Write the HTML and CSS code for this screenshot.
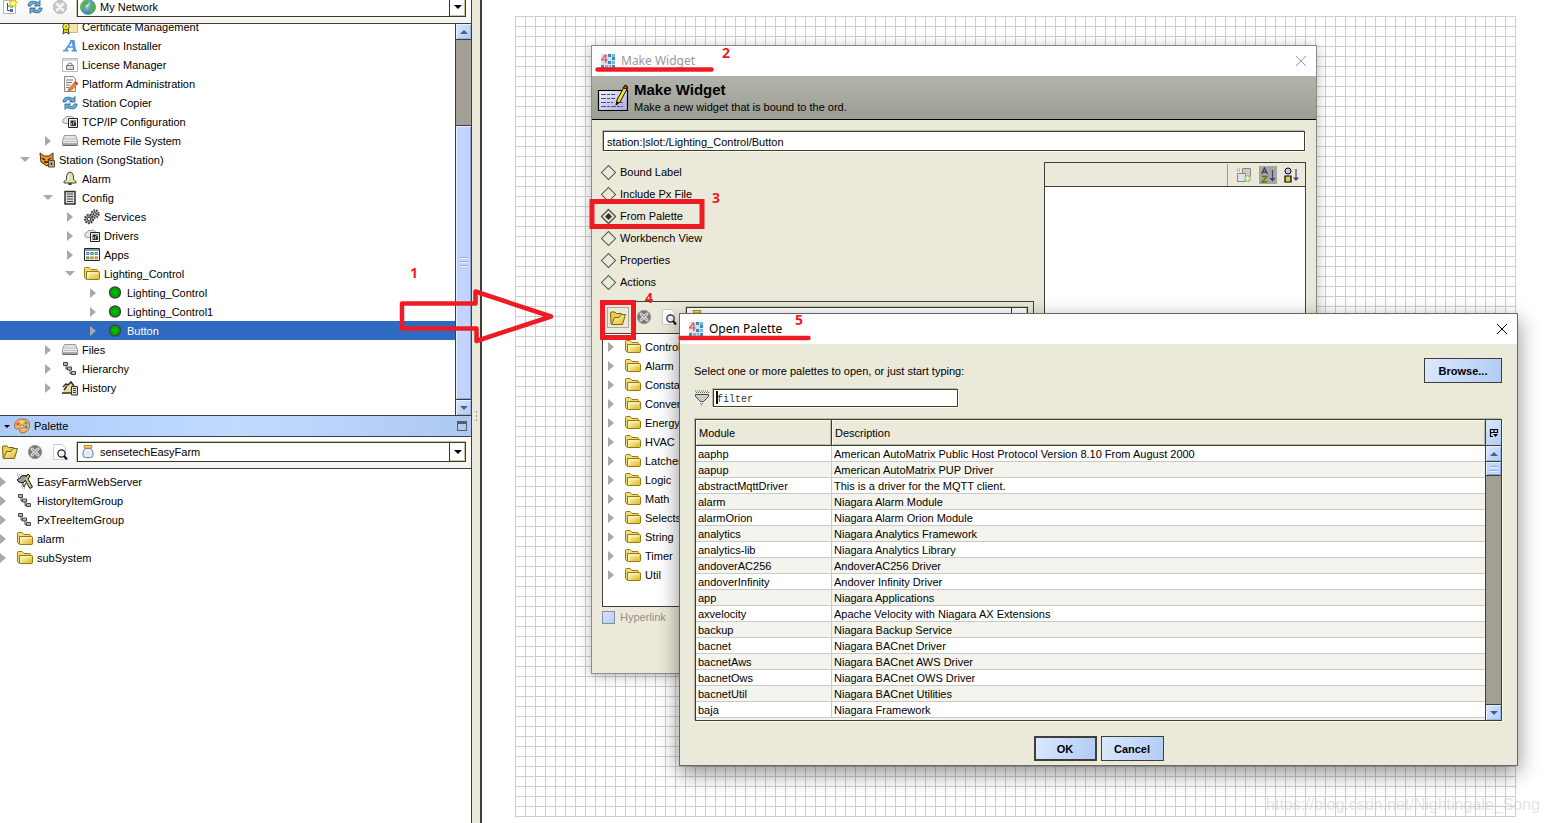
FILE: index.html
```html
<!DOCTYPE html>
<html lang="en">
<head>
<meta charset="utf-8">
<title>Workbench</title>
<link rel="stylesheet" href="styles.css">
</head>
<body>
<svg class="defs" aria-hidden="true">
  <defs>
    <linearGradient id="gold" x1="0" y1="0" x2="1" y2="1"><stop offset="0" stop-color="#fffbd8"/><stop offset="1" stop-color="#dcb718"/></linearGradient>
    <linearGradient id="metal" x1="0" y1="0" x2="0" y2="1"><stop offset="0" stop-color="#f0f0f0"/><stop offset="1" stop-color="#9a9a9a"/></linearGradient>
    <linearGradient id="lilac" x1="0" y1="0" x2="1" y2="1"><stop offset="0" stop-color="#f4f4ff"/><stop offset="1" stop-color="#a9a9e0"/></linearGradient>
    <radialGradient id="lamp"><stop offset="0" stop-color="#0c0"/><stop offset="1" stop-color="#079007"/></radialGradient>
    <radialGradient id="sea" cx=".35" cy=".35"><stop offset="0" stop-color="#d6efff"/><stop offset="1" stop-color="#3b86c4"/></radialGradient>
  </defs>
  <symbol id="folder" viewBox="0 0 16 16"><path d="M.5 11.500V2.500Q.5 1.500 1.500 1.500H5L7 3.500H12.500Q13.500 3.500 13.500 4.500V6H2.500V13.500Z" fill="#f1dc7a" stroke="#96790c"/><path d="M2.500 5.500H14.500Q15.500 5.500 15.500 6.500V12.500Q15.500 13.500 14.500 13.500H3.500Q2.500 13.500 2.500 12.500Z" fill="url(#gold)" stroke="#96790c"/><path d="M4 12.500V7H14" fill="none" stroke="#fff6b8"/></symbol>
  <symbol id="open" viewBox="0 0 16 16"><path d="M1 14L.5 3Q.5 2 1.500 2H5L6.500 3.500H11.500V6" fill="#e9cc50" stroke="#7d6407"/><path d="M1.500 14.500L4.500 7.500H9L11 4.500H15.500L12.500 14.500Z" fill="url(#gold)" stroke="#7d6407"/></symbol>
  <symbol id="sync" viewBox="0 0 16 16"><path d="M1 7C1 3 4 1.500 8 2.500L11 3.500L13 1.500V7H7.500L9.500 5.500C6 4 4 5 4 7Z" fill="#62b3dd" stroke="#24577d" stroke-width=".8"/><path d="M15 9C15 13 12 14.500 8 13.500L5 12.500L3 14.500V9H8.500L6.500 10.500C10 12 12 11 12 9Z" fill="#62b3dd" stroke="#24577d" stroke-width=".8"/></symbol>
  <symbol id="stop" viewBox="0 0 16 16"><circle cx="8" cy="8" r="6.700" fill="#777" stroke="#999"/><path d="M5 5L11 11M11 5L5 11" stroke="#f4f4f4" stroke-width="3" stroke-linecap="round"/><path d="M5 5L11 11M11 5L5 11" stroke="#999" stroke-width="1.400" stroke-linecap="round"/></symbol>
  <symbol id="stop-off" viewBox="0 0 16 16"><circle cx="8" cy="8" r="6.700" fill="#c8c8c8" stroke="#bbb"/><path d="M5 5L11 11M11 5L5 11" stroke="#f6f6f6" stroke-width="2.600" stroke-linecap="round"/></symbol>
  <symbol id="find" viewBox="0 0 16 16"><path d="M1.500.5H10L13.500 4V15.500H1.500Z" fill="#fff" stroke="#ccc"/><circle cx="9.500" cy="9.500" r="3.600" fill="#eef4ff" stroke="#222" stroke-width="1.200"/><path d="M12 12L15 15.500" stroke="#111" stroke-width="2"/></symbol>
  <symbol id="newtree" viewBox="0 0 16 16"><path d="M1.500 1.500H13.500V14.500H1.500Z" fill="#fff" stroke="#b5b5b5"/><path d="M5.500 4V11.500H9M5.500 7H9" fill="none" stroke="#555"/><path d="M8 5.500H11V8.500H8ZM8 10H11V13H8Z" fill="#3d73c5"/><path d="M11 0L12.500 2.500L15.500 3L13.500 5L14 8L11 6.500L8 8L8.500 5L7 3L10 2.500Z" fill="#fff79a" stroke="#e8c400"/></symbol>
  <symbol id="globe" viewBox="0 0 16 16"><circle cx="8" cy="8" r="7.500" fill="url(#sea)" stroke="#68a968"/><path d="M3 3Q7 0 9 2L8 5L5 7L6 10L4 12Q0 8 3 3ZM10 6L14 4Q16 8 13 12L10 14L9 10Z" fill="#59b052"/></symbol>
  <symbol id="cert" viewBox="0 0 16 16"><path d="M4.500 2H15.500V13.500H4.500Z" fill="#fbe5a2" stroke="#c9b98a"/><path d="M2 9L1 15L4 13L7 15L6 9Z" fill="#f4e800" stroke="#333"/><circle cx="4" cy="7.500" r="3.300" fill="#fff31c" stroke="#555"/><circle cx="4" cy="7.500" r="1" fill="#777"/></symbol>
  <symbol id="lexicon" viewBox="0 0 16 16"><path d="M8 2H12.500L14 12H15V13.500H9.500V12H11L10.700 9.800H6.300L5 12H6.500V13.500H1V12H2.500L8 4ZM7.200 8.200H10.500L9.900 4.200Z" fill="#5d92dc"/></symbol>
  <symbol id="license" viewBox="0 0 16 16"><path d="M.5 1.500H15.500V14.500H.5Z" fill="#fff" stroke="#bbb"/><path d="M1 2H15V4H1Z" fill="#d6dbe4"/><path d="M4.500 8.500H11.500V12.500H4.500Z" fill="#ddd" stroke="#777"/><path d="M6 8V7Q8 4.500 10 7V8" fill="none" stroke="#777"/></symbol>
  <symbol id="edit" viewBox="0 0 16 16"><path d="M2.500.5H11.500L13.500 3V15.500H2.500Z" fill="#f5f5f5" stroke="#888"/><path d="M4 4H11M4 6.500H10M4 9H8M4 11.500H7" stroke="#777"/><path d="M7 12.500L13 6L15.500 8L9.500 14L6.500 14.500Z" fill="#f58a1d" stroke="#a24c00" stroke-width=".7"/><path d="M13 6L15.500 8" stroke="#d33" stroke-width="2"/></symbol>
  <symbol id="net" viewBox="0 0 16 16"><path d="M3 9.500Q0 9 .7 6.500Q1 4.500 3 4.500Q4 1.500 7 2.500Q10 1 11.500 4Q14.500 4.500 14 7V9.500Z" fill="#e8e8e8" stroke="#999"/><path d="M6.500 4.500H15.500V13.500H6.500Z" fill="#eee" stroke="#222"/><path d="M8.500 6.500H14V12H8.500Z" fill="#333"/><path d="M9.500 11V9M11.500 11V8" stroke="#aaa"/><path d="M12 7.500H14" stroke="#36d336" stroke-width="1.500"/></symbol>
  <symbol id="drive" viewBox="0 0 16 16"><path d="M2.500 2.500H13.500L15.500 7.500V12.500H.5V7.500Z" fill="url(#metal)" stroke="#999"/><path d="M1 7.500H15M1 9.500H15" stroke="#eee"/><path d="M1 12.500H15" stroke="#666"/></symbol>
  <symbol id="fox" viewBox="0 0 16 16"><path d="M1 1L5 4H10L14 1V9L8 14L2 10Z" fill="#f49c20" stroke="#4a2a05"/><path d="M3 6L6 8M12 6L9 8M5 10H9" stroke="#311" stroke-width="1.400"/><path d="M9.500 8.500H15.500V15H9.500Z" fill="#c1af86" stroke="#554a36"/><path d="M10.500 8Q12.500 4 14.500 8" fill="none" stroke="#777"/><path d="M12.500 10.500V13" stroke="#333" stroke-width="1.500"/></symbol>
  <symbol id="bell" viewBox="0 0 16 16"><path d="M8 1Q11 1.500 11.500 5V8.500L14 10.500V12H2V10.500L4.500 8.500V5Q5 1.500 8 1Z" fill="#e5e19a" stroke="#444"/><path d="M6.500 13H9.500" stroke="#333" stroke-width="2"/><path d="M6.500 4V9" stroke="#fff"/></symbol>
  <symbol id="config" viewBox="0 0 16 16"><path d="M3 1.500H13V14H3Z" fill="#ddd" stroke="#333" stroke-width="1.500"/><path d="M5 4H11M5 6.500H11M5 9H11M5 11.500H11" stroke="#444" stroke-width="1.200"/></symbol>
  <symbol id="gears" viewBox="0 0 16 16"><circle cx="5" cy="10" r="4" fill="#bbb" stroke="#444" stroke-width="2.400" stroke-dasharray="1.700 1"/><circle cx="5" cy="10" r="1.800" fill="#fff" stroke="#333"/><circle cx="11" cy="5" r="3.600" fill="#bbb" stroke="#444" stroke-width="2.200" stroke-dasharray="1.500 1"/><circle cx="11" cy="5" r="1.400" fill="#fff" stroke="#333"/></symbol>
  <symbol id="apps" viewBox="0 0 16 16"><path d="M.5 1.500H15.500V13.500H.5Z" fill="#fff" stroke="#222"/><path d="M1 3H15" stroke="#8d9cb5" stroke-width="2"/><path d="M2.500 5.500H5V7.500H2.500ZM11 5.500H13.500V7.500H11Z" fill="#8fc2ee" stroke="#3a78b5" stroke-width=".8"/><path d="M6.700 5.500H9.300V7.500H6.700ZM2.500 9.800H5V12H2.500Z" fill="#8ed08a" stroke="#3b8b39" stroke-width=".8"/><path d="M6.700 9.800H9.300V12H6.700ZM11 9.800H13.500V12H11Z" fill="#f8c66e" stroke="#b9711e" stroke-width=".8"/></symbol>
  <symbol id="dot" viewBox="0 0 16 16"><circle cx="8" cy="7.500" r="5.500" fill="url(#lamp)" stroke="#444" stroke-width="1.400"/></symbol>
  <symbol id="hier" viewBox="0 0 16 16"><path d="M4 4V8H6M8 9V12.500H10" fill="none" stroke="#444"/><path d="M1.500 1.500H5.500V4.500H1.500ZM5.500 6H9.500V9H5.500ZM9.500 10.500H13.500V13.500H9.500Z" fill="#bbb" stroke="#444"/></symbol>
  <symbol id="history" viewBox="0 0 16 16"><path d="M.5 13L4 6L6 8L9 2L13 7V13Z" fill="#ecd6a0"/><path d="M0 13H9M1 7L4 4L6 5L9 2L12 6M2 10L5 6" fill="none" stroke="#332d20" stroke-width="1.500"/><path d="M9.500 6.500H15.500V15H9.500Z" fill="#ddd" stroke="#333"/><path d="M11 8.500H14M11 10.500H14M11 12.500H14" stroke="#444"/></symbol>
  <symbol id="paint" viewBox="0 0 16 16"><path d="M8 1Q15 1 15.500 6Q16 13 9 15Q5 15 6 12Q6 10 3 11Q0 11 .5 7Q2 1 8 1Z" fill="#eeb66f" stroke="#a9672b"/><circle cx="4" cy="6" r="1.500" fill="#e64a28"/><circle cx="8" cy="4" r="1.500" fill="#f7e44c"/><circle cx="12" cy="5" r="1.500" fill="#49a94a"/><circle cx="12" cy="9" r="1.500" fill="#3c7fd0"/><circle cx="8" cy="8.500" r="1.600" fill="#fff" stroke="#a9672b"/></symbol>
  <symbol id="jar" viewBox="0 0 16 16"><path d="M5 4.500H11V5Q13 6 13 9V11Q13 13.500 10.500 13.500H5.500Q3 13.500 3 11V9Q3 6 5 5Z" fill="#e1edfb" stroke="#6e7f9a"/><path d="M4 1.500H12L11.500 4H4.500Z" fill="#f7d981" stroke="#b98a1d"/></symbol>
  <symbol id="hammer" viewBox="0 0 16 16"><path d="M0 1H5M1 3H4M5 14H9M4 12H8" stroke="#668" stroke-dasharray="1 1"/><path d="M0 6L6 1.500L12 2L10 5L6 9L2 8Z" fill="#999" stroke="#111"/><path d="M9 3L11 0L13 2L11 5L15.500 13L13 14.500L8 6" fill="#b8d27b" stroke="#111"/><path d="M5 9L7 13L9 9" fill="#ccc" stroke="#333"/></symbol>
  <symbol id="logo" viewBox="0 0 14 14"><path d="M0 0H14V14H0Z" fill="#dfe1e4"/><path d="M7 0H10V3H7ZM11 3H14V6H11ZM7 7H10V10H7ZM11 11H14V14H11ZM0 11H3V14H0Z" fill="#2b8fc8"/><path d="M11 0H14V3H11ZM4 11H7V14H4ZM8 11H10V14H8ZM11 7H14V10H11Z" fill="#79b8dc"/><path d="M4.500 .5L.7 6H6.500M4.800 1V9" fill="none" stroke="#e3404a" stroke-width="1.200"/></symbol>
  <symbol id="note" viewBox="0 0 32 28"><path d="M1.500 6.500H30.500V26.500H1.500Z" fill="url(#lilac)" stroke="#000" stroke-width="1.200"/><path d="M4 10.500H18M4 14.500H18M4 18.500H16M4 22.500H26M21 18.500H27" stroke="#4a4a90" stroke-dasharray="5 1 3 1"/><path d="M19 21L20 16L27 3L30 5L23 18Z" fill="#ece321" stroke="#111"/><path d="M26 4L28 1Q31 1 30.500 5Z" fill="#c23b3b" stroke="#111"/><path d="M19 21L20 17L22 19Z" fill="#111"/></symbol>
  <symbol id="funnel" viewBox="0 0 16 16"><path d="M1 1H15" stroke="#a55" stroke-dasharray="1 1"/><path d="M2 2.500H15" stroke="#575" stroke-dasharray="1 1"/><path d="M6 13.500H10M7 15H9" stroke="#66a" stroke-width="1.200" stroke-dasharray="1 1"/><path d="M1.500 4.500H14.500V6.500L9.500 11.500H6.500L1.500 6.500Z" fill="#ccc" stroke="#444"/></symbol>
  <symbol id="addrow" viewBox="0 0 16 16"><path d="M6.500 1.500H14.500V9.500H6.500Z" fill="#ccccc0" stroke="#888"/><path d="M1.500 6.500H9.500V14.500H1.500Z" fill="#e1e1ee" stroke="#888"/><path d="M1 2H5M1 4H4" stroke="#888" stroke-dasharray="1 1"/><circle cx="11.500" cy="11.500" r="3.500" fill="#9fc683"/><path d="M11.500 9.500V13.500M9.500 11.500H13.500" stroke="#fff" stroke-width="1.400"/></symbol>
  <symbol id="az" viewBox="0 0 16 16"><path d="M1.500 7L4.500 1L7.500 7M2.500 5H6.500" fill="none" stroke="#404080" stroke-width="1.400"/><path d="M2 9.500H7L2 15H7.500" fill="none" stroke="#717118" stroke-width="1.400"/><path d="M12.500 3V13" stroke="#404080" stroke-width="1.200"/><path d="M9.500 11H15.500L12.500 14.500Z" fill="#404080"/></symbol>
  <symbol id="kind" viewBox="0 0 16 16"><circle cx="4" cy="4" r="3" fill="#c3c8f3" stroke="#000"/><path d="M1 9H7V15H1Z" fill="#d2cf5d" stroke="#000" stroke-width="1.200"/><path d="M12 2V13" stroke="#404080" stroke-width="1.200"/><path d="M9 10.500H15L12 14Z" fill="#404080"/></symbol>
  <symbol id="cross" viewBox="0 0 12 12"><path d="M1 1L11 11M11 1L1 11" stroke="currentColor" fill="none"/></symbol>
  <symbol id="cols" viewBox="0 0 10 10"><path d="M4 8.500H1.500V1.500H8.500V5M1.500 4.500H8.500M5 1.500V4.500" fill="none" stroke="#000" stroke-width="1.200"/><path d="M4 6H9L6.500 9Z" fill="#000"/></symbol>
</svg>

<div class="app">
  <aside class="sidebar">
    <section class="nav">
      <div class="toolbar toolbar-cut">
        <button class="tool" aria-label="New tree"><svg class="icon"><use href="#newtree"/></svg></button>
        <button class="tool" aria-label="Refresh"><svg class="icon"><use href="#sync"/></svg></button>
        <button class="tool" aria-label="Stop"><svg class="icon"><use href="#stop-off"/></svg></button>
        <div class="combo"><svg class="icon"><use href="#globe"/></svg><select aria-label="Network"><option>My Network</option></select><span class="drop"></span></div>
      </div>
      <div class="view">
        <ul class="tree tree-scrolled">
          <li class="row l2"><i class="tw"></i><svg class="icon"><use href="#cert"/></svg>Certificate Management</li>
          <li class="row l2"><i class="tw"></i><svg class="icon"><use href="#lexicon"/></svg>Lexicon Installer</li>
          <li class="row l2"><i class="tw"></i><svg class="icon"><use href="#license"/></svg>License Manager</li>
          <li class="row l2"><i class="tw"></i><svg class="icon"><use href="#edit"/></svg>Platform Administration</li>
          <li class="row l2"><i class="tw"></i><svg class="icon"><use href="#sync"/></svg>Station Copier</li>
          <li class="row l2"><i class="tw"></i><svg class="icon"><use href="#net"/></svg>TCP/IP Configuration</li>
          <li class="row l2"><i class="tw shut"></i><svg class="icon"><use href="#drive"/></svg>Remote File System</li>
          <li class="row l1"><i class="tw open"></i><svg class="icon"><use href="#fox"/></svg>Station (SongStation)</li>
          <li class="row l2"><i class="tw"></i><svg class="icon"><use href="#bell"/></svg>Alarm</li>
          <li class="row l2"><i class="tw open"></i><svg class="icon"><use href="#config"/></svg>Config</li>
          <li class="row l3"><i class="tw shut"></i><svg class="icon"><use href="#gears"/></svg>Services</li>
          <li class="row l3"><i class="tw shut"></i><svg class="icon"><use href="#net"/></svg>Drivers</li>
          <li class="row l3"><i class="tw shut"></i><svg class="icon"><use href="#apps"/></svg>Apps</li>
          <li class="row l3"><i class="tw open"></i><svg class="icon"><use href="#folder"/></svg>Lighting_Control</li>
          <li class="row l4"><i class="tw shut"></i><svg class="icon"><use href="#dot"/></svg>Lighting_Control</li>
          <li class="row l4"><i class="tw shut"></i><svg class="icon"><use href="#dot"/></svg>Lighting_Control1</li>
          <li class="row l4 selected"><i class="tw shut"></i><svg class="icon"><use href="#dot"/></svg>Button</li>
          <li class="row l2"><i class="tw shut"></i><svg class="icon"><use href="#drive"/></svg>Files</li>
          <li class="row l2"><i class="tw shut"></i><svg class="icon"><use href="#hier"/></svg>Hierarchy</li>
          <li class="row l2"><i class="tw shut"></i><svg class="icon"><use href="#history"/></svg>History</li>
        </ul>
        <div class="scroll">
          <button class="arrow up" aria-label="Scroll up"></button>
          <div class="track"></div>
          <div class="thumb grow"><span class="grip"></span></div>
          <button class="arrow down" aria-label="Scroll down"></button>
        </div>
      </div>
    </section>
    <section class="palette">
      <h2 class="bar"><i class="caret"></i><svg class="icon"><use href="#paint"/></svg>Palette<button class="max" aria-label="Maximize"></button></h2>
      <div class="toolbar">
        <button class="tool" aria-label="Open palette"><svg class="icon"><use href="#open"/></svg></button>
        <button class="tool" aria-label="Close palette"><svg class="icon"><use href="#stop"/></svg></button>
        <button class="tool" aria-label="Preview"><svg class="icon"><use href="#find"/></svg></button>
        <div class="combo"><svg class="icon"><use href="#jar"/></svg><select aria-label="Palette"><option>sensetechEasyFarm</option></select><span class="drop"></span></div>
      </div>
      <ul class="tree tree-flush">
        <li class="row"><i class="tw shut"></i><svg class="icon"><use href="#hammer"/></svg>EasyFarmWebServer</li>
        <li class="row"><i class="tw shut"></i><svg class="icon"><use href="#hier"/></svg>HistoryItemGroup</li>
        <li class="row"><i class="tw shut"></i><svg class="icon"><use href="#hier"/></svg>PxTreeItemGroup</li>
        <li class="row"><i class="tw shut"></i><svg class="icon"><use href="#folder"/></svg>alarm</li>
        <li class="row"><i class="tw shut"></i><svg class="icon"><use href="#folder"/></svg>subSystem</li>
      </ul>
    </section>
  </aside>
  <div class="splitter"><span></span></div>
  <main class="workspace"><div class="canvas"></div></main>

  <section class="window make" aria-label="Make Widget">
    <header class="title faded"><svg class="logo"><use href="#logo"/></svg>Make Widget<button class="close" aria-label="Close"><svg><use href="#cross"/></svg></button></header>
    <div class="banner"><svg class="note"><use href="#note"/></svg><div><h1>Make Widget</h1><p>Make a new widget that is bound to the ord.</p></div></div>
    <div class="make-body">
      <input class="field ord" type="text" aria-label="Ord" value="station:|slot:/Lighting_Control/Button">
      <div class="columns">
        <div>
          <label class="choice"><input type="radio" name="source">Bound Label</label>
          <label class="choice"><input type="radio" name="source">Include Px File</label>
          <label class="choice"><input type="radio" name="source" checked>From Palette</label>
          <label class="choice"><input type="radio" name="source">Workbench View</label>
          <label class="choice"><input type="radio" name="source">Properties</label>
          <label class="choice"><input type="radio" name="source">Actions</label>
          <div class="chooser">
            <div class="toolbar beige">
              <button class="tool pressed" aria-label="Open palette"><svg class="icon"><use href="#open"/></svg></button>
              <button class="tool" aria-label="Close palette"><svg class="icon"><use href="#stop"/></svg></button>
              <button class="tool" aria-label="Preview"><svg class="icon"><use href="#find"/></svg></button>
              <div class="combo"><svg class="icon"><use href="#jar"/></svg><select aria-label="Widget palette"><option></option></select><span class="drop"></span></div>
            </div>
            <ul class="tree tree-widgets">
              <li class="row"><i class="tw shut"></i><svg class="icon"><use href="#folder"/></svg>Control</li>
              <li class="row"><i class="tw shut"></i><svg class="icon"><use href="#folder"/></svg>Alarm</li>
              <li class="row"><i class="tw shut"></i><svg class="icon"><use href="#folder"/></svg>Constants</li>
              <li class="row"><i class="tw shut"></i><svg class="icon"><use href="#folder"/></svg>Conversion</li>
              <li class="row"><i class="tw shut"></i><svg class="icon"><use href="#folder"/></svg>Energy</li>
              <li class="row"><i class="tw shut"></i><svg class="icon"><use href="#folder"/></svg>HVAC</li>
              <li class="row"><i class="tw shut"></i><svg class="icon"><use href="#folder"/></svg>Latches</li>
              <li class="row"><i class="tw shut"></i><svg class="icon"><use href="#folder"/></svg>Logic</li>
              <li class="row"><i class="tw shut"></i><svg class="icon"><use href="#folder"/></svg>Math</li>
              <li class="row"><i class="tw shut"></i><svg class="icon"><use href="#folder"/></svg>Selects</li>
              <li class="row"><i class="tw shut"></i><svg class="icon"><use href="#folder"/></svg>String</li>
              <li class="row"><i class="tw shut"></i><svg class="icon"><use href="#folder"/></svg>Timer</li>
              <li class="row"><i class="tw shut"></i><svg class="icon"><use href="#folder"/></svg>Util</li>
            </ul>
          </div>
          <label class="check"><input type="checkbox" disabled>Hyperlink</label>
        </div>
        <div class="sheet">
          <div class="sheet-tools"><button aria-label="Add"><svg class="icon"><use href="#addrow"/></svg></button><button class="on" aria-label="Sort by name"><svg class="icon"><use href="#az"/></svg></button><button aria-label="Sort by kind"><svg class="icon"><use href="#kind"/></svg></button></div>
        </div>
      </div>
    </div>
  </section>

  <section class="window picker" aria-label="Open Palette">
    <header class="title"><svg class="logo"><use href="#logo"/></svg>Open Palette<button class="close" aria-label="Close"><svg><use href="#cross"/></svg></button></header>
    <div class="picker-body">
      <div class="prompt"><label for="filter">Select one or more palettes to open, or just start typing:</label><button class="btn browse">Browse...</button></div>
      <div class="filter"><svg class="icon"><use href="#funnel"/></svg><div class="filter-box"><input class="field" id="filter" type="text" placeholder="filter"></div></div>
      <div class="list">
        <div class="rows">
          <table>
            <thead><tr><th>Module</th><th>Description</th></tr></thead>
            <tbody>
              <tr><td>aaphp</td><td>American AutoMatrix Public Host Protocol Version 8.10 From August 2000</td></tr>
              <tr><td>aapup</td><td>American AutoMatrix PUP Driver</td></tr>
              <tr><td>abstractMqttDriver</td><td>This is a driver for the MQTT client.</td></tr>
              <tr><td>alarm</td><td>Niagara Alarm Module</td></tr>
              <tr><td>alarmOrion</td><td>Niagara Alarm Orion Module</td></tr>
              <tr><td>analytics</td><td>Niagara Analytics Framework</td></tr>
              <tr><td>analytics-lib</td><td>Niagara Analytics Library</td></tr>
              <tr><td>andoverAC256</td><td>AndoverAC256 Driver</td></tr>
              <tr><td>andoverInfinity</td><td>Andover Infinity Driver</td></tr>
              <tr><td>app</td><td>Niagara Applications</td></tr>
              <tr><td>axvelocity</td><td>Apache Velocity with Niagara AX Extensions</td></tr>
              <tr><td>backup</td><td>Niagara Backup Service</td></tr>
              <tr><td>bacnet</td><td>Niagara BACnet Driver</td></tr>
              <tr><td>bacnetAws</td><td>Niagara BACnet AWS Driver</td></tr>
              <tr><td>bacnetOws</td><td>Niagara BACnet OWS Driver</td></tr>
              <tr><td>bacnetUtil</td><td>Niagara BACnet Utilities</td></tr>
              <tr><td>baja</td><td>Niagara Framework</td></tr>
            </tbody>
          </table>
        </div>
        <div class="scroll">
          <button class="columns-btn" aria-label="Table options"><svg><use href="#cols"/></svg></button>
          <button class="arrow up" aria-label="Scroll up"></button>
          <div class="thumb"><span class="grip short"></span></div>
          <div class="track grow"></div>
          <button class="arrow down" aria-label="Scroll down"></button>
        </div>
      </div>
      <div class="actions"><button class="btn default">OK</button><button class="btn">Cancel</button></div>
    </div>
  </section>

  <div class="marks">
    <svg class="ink" aria-hidden="true">
      <path d="M402 303.500H475.500V291.500L551 316.500L476.500 341V328.500H402Z" stroke-width="4.500"/>
      <path d="M597.500 69.500H711.500M680.500 338H808.500" stroke-width="4.500"/>
      <path d="M592 201.500H702V226.500H592ZM602.500 302.500H633.500V337.500H602.500Z" stroke-width="5" stroke-linejoin="miter"/>
    </svg>
    <b class="num n1">1</b><b class="num n2">2</b><b class="num n3">3</b><b class="num n4">4</b><b class="num n5">5</b>
    <span class="watermark">https://blog.csdn.net/Nightingale_Song</span>
  </div>
</div>
</body>
</html>
```
FILE: styles.css
```css
* { box-sizing: border-box; }
body { margin: 0; font: 11px/16px "Liberation Sans", Arial, sans-serif; color: #000; background: #fff; }
ul, h1, h2, p { margin: 0; padding: 0; list-style: none; }
button, input, select { font: inherit; color: inherit; margin: 0; padding: 0; border: 0; background: none; border-radius: 0; }
.defs { position: absolute; width: 0; height: 0; }
.app { position: relative; display: flex; height: 100vh; overflow: hidden; }
.icon { flex: none; width: 16px; height: 16px; display: block; }

.sidebar { flex: 0 0 472px; display: flex; flex-direction: column; border-right: 1px solid #3f3f38; }
.nav { flex: 0 0 415px; display: flex; flex-direction: column; }
.toolbar { display: flex; gap: 5px; padding: 5px 5px 6px 0; background: linear-gradient(#fff, #f3f3f3); border-bottom: 1px solid #3f3f38; }
.toolbar-cut { height: 24px; padding-top: 0; align-items: flex-end; overflow: hidden; flex: none; }
.tool { flex: none; width: 20px; height: 20px; display: flex; align-items: center; justify-content: center; }
.combo { flex: 1; display: flex; align-items: center; height: 20px; margin-left: 2px; padding-left: 2px; background: #fff; border: 1px solid #3a3a22; box-shadow: 0 -1px #c5c5b4, -1px 0 #c5c5b4; min-width: 0; }
.combo select { flex: 1; min-width: 0; height: 18px; appearance: none; padding-left: 4px; outline: 0; }
.drop { width: 16px; height: 18px; border-left: 1px solid #3a3a22; display: grid; place-items: center; box-shadow: inset -1px -1px #c5c5a8; }
.drop::before { content: ""; border: 4px solid transparent; border-top-color: #000; border-bottom: 0; }

.view { flex: 1; min-height: 0; display: flex; }
.tree { flex: 1; overflow: hidden; }
.tree-scrolled .row:first-child { margin-top: -7px; }
.row { display: flex; align-items: center; height: 19px; gap: 4px; white-space: nowrap; }
.row .tw { margin-right: 4px; }
.l1 { padding-left: 19px; }
.l2 { padding-left: 42px; }
.l3 { padding-left: 64px; }
.l4 { padding-left: 87px; }
.selected { background: #2e6ac1; color: #fff; }
.tw { flex: none; width: 12px; height: 12px; display: grid; place-items: center; }
.shut::before { content: ""; border: 5px solid transparent; border-left: 6px solid #a9a9a9; border-right: 0; }
.open::before { content: ""; border: 5px solid transparent; border-top: 5px solid #a9a9a9; border-bottom: 0; }

.scroll { flex: none; width: 16px; display: flex; flex-direction: column; border-left: 1px solid #3f3f38; background: #a39f97; }
.arrow { flex: none; height: 16px; width: 100%; display: grid; place-items: center; background: linear-gradient(135deg, #dbe8ff, #b0cbf5); box-shadow: inset 1px 1px #e6f1ff, inset -1px -1px #9ab6e6; }
.arrow.up { border-bottom: 1px solid #3f3f38; }
.arrow.down { border-top: 1px solid #3f3f38; }
.up::before, .down::before { content: ""; border: 4px solid transparent; }
.up::before { border-bottom-color: #4b5f85; border-top: 0; }
.down::before { border-top-color: #4b5f85; border-bottom: 0; }
.track { height: 85px; }
.grow { flex: 1; }
.thumb { min-height: 14px; display: grid; place-items: center; background: #c2d4fd; border-top: 1px solid #3f3f38; box-shadow: inset 1px 1px #e0f0ff, inset -1px -1px #90a8d8; }
.list .thumb { border-top: 0; border-bottom: 1px solid #3f3f38; }
.grip { width: 8px; height: 11px; background: repeating-linear-gradient(#91a9dc 0 1px, #edf5ff 1px 2px, transparent 2px 4px); }
.grip.short { height: 6px; }

.palette { flex: 1; display: flex; flex-direction: column; }
.bar { display: flex; align-items: center; gap: 4px; height: 22px; padding: 0 4px; font-size: 11px; font-weight: normal; background: linear-gradient(90deg, #accbf8, #c1dbff 50%, #adc8f2); border: solid #3f3f38; border-width: 1px 0; }
.caret { border: 3px solid transparent; border-top-color: #000; border-bottom: 0; }
.max { margin-left: auto; width: 10px; height: 10px; border: 1px solid #5b5b5b; border-top-width: 3px; }
.tree-flush { padding-top: 3px; }
.tree-flush .row { margin-left: -3px; }

.splitter { flex: 0 0 10px; background: #ebe9d9; border-right: 2px solid #3f3f33; display: flex; }
.splitter span { width: 1px; height: 11px; margin: 411px 0 0 4px; background: repeating-linear-gradient(#999 0 2px, transparent 2px 4px); }
.workspace { flex: 1; display: flex; padding: 16px 32px 6px 33px; }
.canvas { flex: 1; border: solid #cdcdcd; border-width: 0 1px 1px 0; background: repeating-linear-gradient(90deg, #cdcdcd 0 1px, transparent 1px 10px), repeating-linear-gradient(#cdcdcd 0 1px, transparent 1px 10px); }

.window { position: absolute; background: #ebe9d9; border: 1px solid #8a8a85; }
.make { left: 591px; top: 45px; width: 726px; box-shadow: 0 2px 12px rgba(0, 0, 0, .28); }
.picker { left: 679px; top: 313px; width: 839px; border-color: #666662; box-shadow: 0 7px 20px rgba(0, 0, 0, .45); }
.title { display: flex; align-items: center; height: 30px; padding: 0 9px; gap: 6px; background: #fff; font-family: "Noto Sans", sans-serif; font-size: 12px; }
.faded { color: #999; }
.logo { width: 14px; height: 14px; }
.close { margin-left: auto; width: 12px; height: 12px; }
.close svg { display: block; width: 12px; height: 12px; }
.banner { display: flex; align-items: center; gap: 5px; height: 44px; padding: 1px 0 0 5px; background: linear-gradient(#b2b3aa, #9c9d93); border-bottom: 1px solid #000; }
.note { width: 32px; height: 28px; }
.banner h1 { font-size: 15px; line-height: 18px; }
.banner p { line-height: 16px; }
.make-body { padding: 11px 10px 48px; }
.field { display: block; height: 20px; padding: 2px 3px 0; background: #fff; border: 1px solid #3f3f2e; box-shadow: -1px -1px #b9b9a9, 1px 1px #fbfbe8; outline: 0; }
.ord { width: calc(100% - 2px); margin: 0 1px 10px; }
.columns { display: grid; grid-template-columns: 1fr 262px; gap: 10px; }
.choice { display: flex; align-items: center; gap: 5px; height: 22px; }
.choice input { appearance: none; width: 13px; height: 13px; display: grid; place-items: center; }
.choice input::before { content: ""; width: 9px; height: 9px; border: 1px solid #55554a; transform: rotate(45deg); background: #ebe9d9; }
.choice input:checked::before { background: #333; box-shadow: inset 0 0 0 2px #ebe9d9; }
.chooser { margin-top: 8px; border: 1px solid #3f3f38; background: #fff; }
.beige { background: #ebe9d9; padding: 5px 5px 6px 4px; }
.pressed { border: 1px solid #aaa99b; width: 22px; height: 21px; margin-bottom: -1px; }
.tree-widgets { height: 272px; padding: 3px 0 0 2px; }
.check { display: flex; align-items: center; gap: 5px; height: 16px; margin-top: 2px; color: #92918a; }
.check input { appearance: none; width: 13px; height: 13px; border: 1px solid #888f9f; background: linear-gradient(135deg, #d5e3fc, #b2cbf5); }
.sheet { margin-top: 1px; border: 1px solid #3f3f38; background: #fff; }
.sheet-tools { display: flex; justify-content: flex-end; align-items: center; height: 24px; background: #ebe9d9; border-bottom: 1px solid #3f3f38; gap: 6px; padding-right: 4px; }
.sheet-tools button { width: 18px; height: 18px; display: grid; place-items: center; }
.sheet-tools button:first-child { width: 26px; height: 22px; padding-left: 7px; border-left: 1px solid #999; }
.sheet-tools .on { background: #a6a79d; }

.picker-body { padding: 14px 15px 4px; }
.prompt { display: flex; justify-content: space-between; align-items: center; margin-left: -1px; }
.btn { height: 25px; min-width: 63px; border: 1px solid #3f3f38; font-weight: bold; background: linear-gradient(110deg, #dce9ff, #b0cbf4); }
.browse { width: 78px; }
.default { border-width: 2px; }
.filter { display: flex; align-items: center; gap: 3px; margin: 6px 0 12px -1px; }
.filter-box { position: relative; width: 245px; }
.filter-box::before { content: ""; position: absolute; left: 3px; top: 2px; width: 2px; height: 13px; background: #111; }
.filter .field { width: 100%; height: 18px; font-family: "Liberation Mono", monospace; font-size: 10px; }
.filter input::placeholder { color: #333; opacity: 1; }
.list { display: flex; height: 302px; border: 1px solid #3f3f2e; box-shadow: -1px -1px #b9b9a9, 1px 1px #fbfbe8; }
.rows { flex: 1; overflow: hidden; background: #f4f4ec; }
table { width: 100%; border-collapse: separate; border-spacing: 0; table-layout: fixed; }
th { height: 26px; padding: 0 3px; text-align: left; font-weight: normal; background: #ebe9d9; border-bottom: 1px solid #3f3f2e; box-shadow: inset 1px 1px #fbfbe8, inset -1px -1px #b9b9a9; }
th:first-child { width: 136px; border-right: 1px solid #3f3f2e; }
td { height: 16px; padding: 2px 2px 0; line-height: 13px; border-bottom: 1px solid #cacaca; white-space: nowrap; }
td:first-child { border-right: 1px solid #cacaca; }
tbody tr:nth-child(odd) { background: #fff; }
.columns-btn { flex: none; height: 26px; display: grid; place-items: center; background: linear-gradient(135deg, #dbe8ff, #b0cbf5); border-bottom: 1px solid #3f3f38; }
.columns-btn svg { width: 10px; height: 10px; }
.actions { display: flex; justify-content: center; gap: 4px; margin-top: 15px; }

.marks { position: absolute; inset: 0; pointer-events: none; }
.ink { width: 100%; height: 100%; fill: none; stroke: #ed1c24; stroke-linejoin: round; stroke-linecap: round; }
.num { position: absolute; color: #ed1c24; font: bold 14px/16px "Noto Sans", sans-serif; }
.n1 { left: 410px; top: 265px; }
.n2 { left: 722px; top: 45px; }
.n3 { left: 712px; top: 190px; }
.n4 { left: 645px; top: 290px; }
.n5 { left: 795px; top: 312px; }
.watermark { position: absolute; right: 8px; bottom: 9px; font-size: 16px; line-height: 18px; color: rgba(200, 200, 200, .5); }
```
